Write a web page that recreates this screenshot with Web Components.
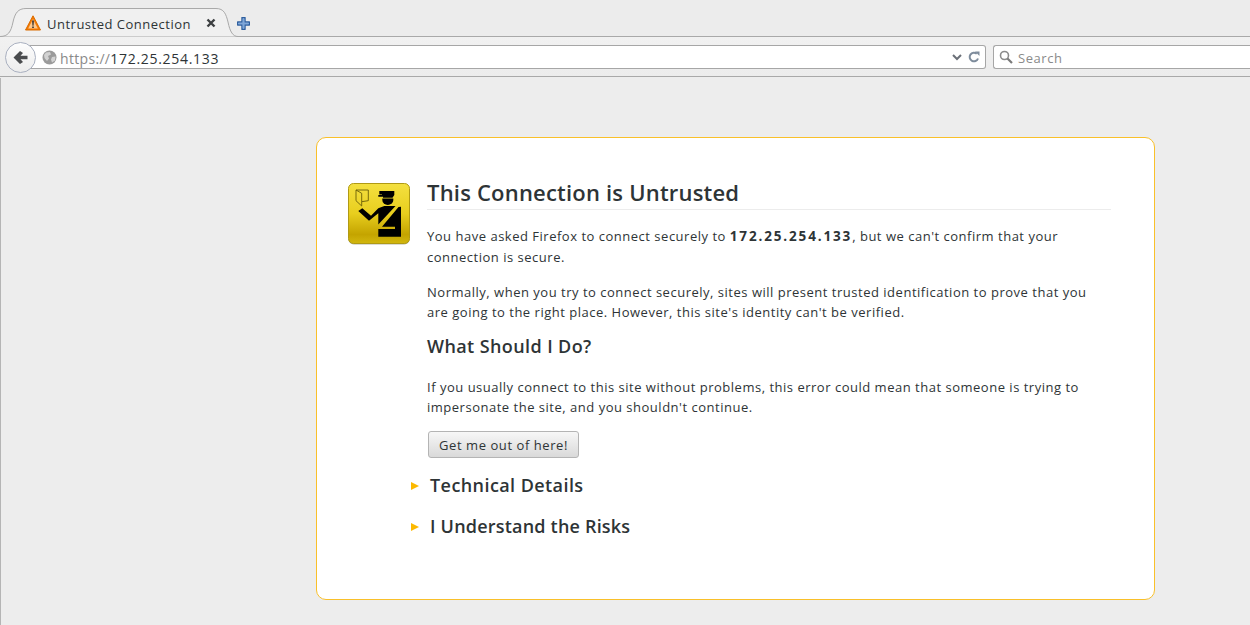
<!DOCTYPE html>
<html>
<head>
<meta charset="utf-8">
<title>Untrusted Connection</title>
<style>
html, body { margin: 0; height: 100%; overflow: hidden; }
body { background: #ededed; font-family: "Open Sans", "Noto Sans", sans-serif; color: #2e3436; }
b { font-size: 13.5px; line-height: 21px; letter-spacing: 1.85px; }
</style>
</head>
<body>
<browser-chrome></browser-chrome>
<page-area>
  <cert-card>
    <h1 slot="title">This Connection is Untrusted</h1>
    <p>You have asked Firefox to connect securely to <b>172.25.254.133</b>, but we can't confirm that your<br>connection is secure.</p>
    <p>Normally, when you try to connect securely, sites will present trusted identification to prove that you<br>are going to the right place. However, this site's identity can't be verified.</p>
    <h2>What Should I Do?</h2>
    <p>If you usually connect to this site without problems, this error could mean that someone is trying to<br>impersonate the site, and you shouldn't continue.</p>
    <button>Get me out of here!</button>
    <expander-row slot="more" style="letter-spacing:.42px">Technical Details</expander-row>
    <expander-row slot="more" style="letter-spacing:.2px">I Understand the Risks</expander-row>
  </cert-card>
</page-area>

<script>
class BrowserChrome extends HTMLElement {
  connectedCallback() {
    const shadow = this.attachShadow({mode: 'open'});
    shadow.innerHTML = `
<style>
:host { display: block; height: 78px; font-size: 13px; color: #2e3436; }
.tabs { height: 37px; box-sizing: border-box; border-bottom: 1px solid #a9a9a9; display: flex; align-items: flex-end; background: #ececec; }
.tab { width: 238px; height: 29px; position: relative; margin-bottom: -1px; flex: none; }
.tab svg.shape { position: absolute; left: 0; top: 0; }
.tab .inner { position: absolute; left: 25px; top: 1px; height: 29px; display: flex; align-items: center; }
.inner svg { margin-top: -2px; }
.title { margin-left: 6px; letter-spacing: .5px; white-space: nowrap; }
.close { position: absolute; left: 206px; top: 10px; }
.plus { margin: 0 0 6px -1px; }
.nav { height: 40px; box-sizing: border-box; background: linear-gradient(#f1f1f1, #ececec); border-bottom: 1px solid #a9a9a9; display: flex; align-items: flex-start; padding: 8px 0 0 5px; position: relative; }
.url { margin-left: 11px; width: 970px; flex: none; height: 24px; box-sizing: border-box; background: #fff; border: 1px solid #a6a6a6; border-left: 0; border-radius: 0 3px 3px 0; display: flex; align-items: center; padding-left: 44px; font-size: 14px; letter-spacing: .7px; }
.url .txt { padding-top: 2px; }
.url .dim { color: #8a8a8a; letter-spacing: .32px; }
.url .end { margin-left: auto; display: flex; align-items: center; gap: 6px; padding-right: 5px; }
.search { margin-left: 7px; flex: 1; height: 24px; box-sizing: border-box; background: #fff; border: 1px solid #a6a6a6; border-right: 0; border-radius: 3px 0 0 3px; display: flex; align-items: center; padding-left: 5px; color: #8a8a8a; letter-spacing: .55px; }
.search span { margin-left: 5px; padding-top: 2px; }
.back { position: absolute; left: 5px; top: 5px; width: 31px; height: 31px; box-sizing: border-box; border-radius: 50%; border: 1px solid #a9b0c0; background: linear-gradient(#fdfdfd, #ececec); display: flex; align-items: center; justify-content: center; }
.globe { position: absolute; left: 42px; top: 13px; }
</style>
<div class="tabs">
  <div class="tab">
    <svg class="shape" width="238" height="29"><path d="M0 28.500C8 28.500 11 24 13 14C15 5 18 .5 26 .5L216 .5C224 .5 226 6 228 14C230 24 233 28.500 238 28.500" fill="#f0f0f0" stroke="#a9a9a9"/></svg>
    <div class="inner">
      <svg width="16" height="16" viewBox="0 0 16 16"><path d="M8 .8L15.500 15H.5Z" fill="#f57900" stroke="#d96c00" stroke-linejoin="round"/><path d="M8 4L12.800 13.500H3.200Z" fill="#fcc88e"/><path d="M7.100 5.500H8.900L8.500 10.700H7.500ZM7.200 11.400H8.800V13H7.200Z" fill="#2e2e2e"/></svg>
      <span class="title">Untrusted Connection</span>
    </div>
    <svg class="close" width="10" height="10" viewBox="0 0 10 10"><path d="M1.500 1.500L8.500 8.500M8.500 1.500L1.500 8.500" stroke="#3c3f41" stroke-width="2.400"/></svg>
  </div>
  <svg class="plus" width="13" height="13" viewBox="0 0 13 13"><path d="M6.500 1V12M1 6.500H12" stroke="#2f5f9e" stroke-width="4.400" stroke-linecap="round"/><path d="M6.500 2V11M2 6.500H11" stroke="#7ea6d8" stroke-width="2.200" stroke-linecap="round"/></svg>
</div>
<div class="nav">
  <div class="url">
    <span class="txt"><span class="dim">https://</span>172.25.254.133</span>
    <span class="end">
      <svg width="10" height="7" viewBox="0 0 10 7"><path d="M1 1L5 5L9 1" fill="none" stroke="#6b7078" stroke-width="2"/></svg>
      <svg width="12" height="12" viewBox="0 0 12 12"><path d="M10 7.500A4.300 4.300 0 1 1 8.800 2.800" fill="none" stroke="#7e8c9c" stroke-width="2"/><path d="M7 .5H11.500V5Z" fill="#7e8c9c"/></svg>
    </span>
  </div>
  <div class="search">
    <svg width="14" height="14" viewBox="0 0 14 14"><circle cx="5.500" cy="5.500" r="4" fill="none" stroke="#8b8b8b" stroke-width="1.600"/><path d="M8.500 8.500L13 13" stroke="#7a7a7a" stroke-width="2.200"/></svg>
    <span>Search</span>
  </div>
  <div class="back"><svg width="15" height="15" viewBox="0 0 15 15"><path d="M.5 7.500L7 1L10 3L7.500 5.700H14.500V9.300H7.500L10 12L7 14Z" fill="#4a4c4e"/></svg></div>
  <svg class="globe" width="15" height="15" viewBox="0 0 15 15"><circle cx="7.500" cy="7.500" r="7" fill="#9b9b9b"/><path d="M4 2.500L8 2L9 4.500L6 6L7 8.500L5 11L2.500 8L2 5ZM10 7L13.500 6.500L13 10.500L10 12.500L9 9.500Z" fill="#d2d2d2"/></svg>
</div>`;
  }
}

class PageArea extends HTMLElement {
  connectedCallback() {
    const shadow = this.attachShadow({mode: 'open'});
    shadow.innerHTML = `
<style>
:host { display: block; height: 547px; box-sizing: border-box; padding: 59px 0 0 315px; border-left: 1px solid #b5b5b5; }
</style>
<slot></slot>`;
  }
}

class CertCard extends HTMLElement {
  connectedCallback() {
    const shadow = this.attachShadow({mode: 'open'});
    shadow.innerHTML = `
<style>
:host { display: block; width: 839px; height: 463px; box-sizing: border-box; background: #fff; border: 1px solid #f9c02a; border-radius: 10px; padding: 45px 43px 0 31px; font-size: 13px; letter-spacing: .51px; line-height: 20px; }
.top { display: flex; gap: 17px; }
.badge { flex: none; width: 62px; height: 62px; }
.body { flex: 1; min-width: 0; }
::slotted(h1) { margin: -3px 0 16px; padding-bottom: 5px; font-size: 22px; font-weight: 600; line-height: 24px; border-bottom: 1px solid #ececec; letter-spacing: .2px; }
::slotted(h2) { margin: -3px 0 19px; font-size: 18px; font-weight: 600; line-height: 24px; letter-spacing: .4px; }
::slotted(p) { margin: 0 0 15px; }
::slotted(button) { display: block; margin: -1px 0 0 1px; width: 151px; height: 27px; padding: 0; box-sizing: border-box; border: 1px solid #b4b4b4; border-radius: 3px; background: linear-gradient(#f7f7f7, #d9d9d9); color: #2e3436; font: inherit; letter-spacing: .57px; }
.more { margin: 13px 0 0 63px; display: flex; flex-direction: column; gap: 13px; }
</style>
<div class="top">
  <svg class="badge" viewBox="0 0 62 62">
    <defs><linearGradient id="g" x1="0" y1="0" x2="0" y2="1"><stop offset="0" stop-color="#f4e040"/><stop offset=".5" stop-color="#e8ce1e"/><stop offset=".85" stop-color="#c4a400"/><stop offset="1" stop-color="#d2b70e"/></linearGradient></defs>
    <rect x=".5" y="1.500" width="61" height="60" rx="5" fill="#8a8a70" fill-opacity=".6"/>
    <rect x=".5" y=".5" width="61" height="60" rx="5" fill="url(#g)" stroke="#b09a14"/>
    <path d="M8 7H20.300V17.700L13.700 18.700V23L8 17.700ZM8 7L13.700 10.300V18.700" fill="none" stroke="#6a5f08" stroke-width=".9"/>
    <path d="M31.300 8H46.300V12L44.500 14.700H35V13.700H30.300V12H34V11.500H31.300Z" fill="#000"/>
    <path d="M34.300 15.500H45.300V17A5.500 5 0 0 1 34.300 17Z" fill="#000"/>
    <path d="M10.300 28L14.300 25.300L23 32.700L30.300 25.300L36.300 23H47.500L30.300 41.500V30.300L21 37.700Z" fill="#000"/>
    <path d="M50.500 24L53 23.700V53.700H30.300V46H47V43.700H34Z" fill="#000"/>
  </svg>
  <div class="body">
    <slot name="title"></slot>
    <slot></slot>
  </div>
</div>
<div class="more"><slot name="more"></slot></div>`;
  }
}

class ExpanderRow extends HTMLElement {
  connectedCallback() {
    const shadow = this.attachShadow({mode: 'open'});
    shadow.innerHTML = `
<style>
:host { display: flex; align-items: center; font-size: 18px; font-weight: 600; line-height: 28px; }
i { width: 0; height: 0; border-left: 8px solid #fcb900; border-top: 4px solid transparent; border-bottom: 4px solid transparent; margin-right: 11px; margin-top: 2px; }
</style>
<i></i><slot></slot>`;
  }
}

customElements.define('browser-chrome', BrowserChrome);
customElements.define('page-area', PageArea);
customElements.define('cert-card', CertCard);
customElements.define('expander-row', ExpanderRow);
</script>
</body>
</html>
